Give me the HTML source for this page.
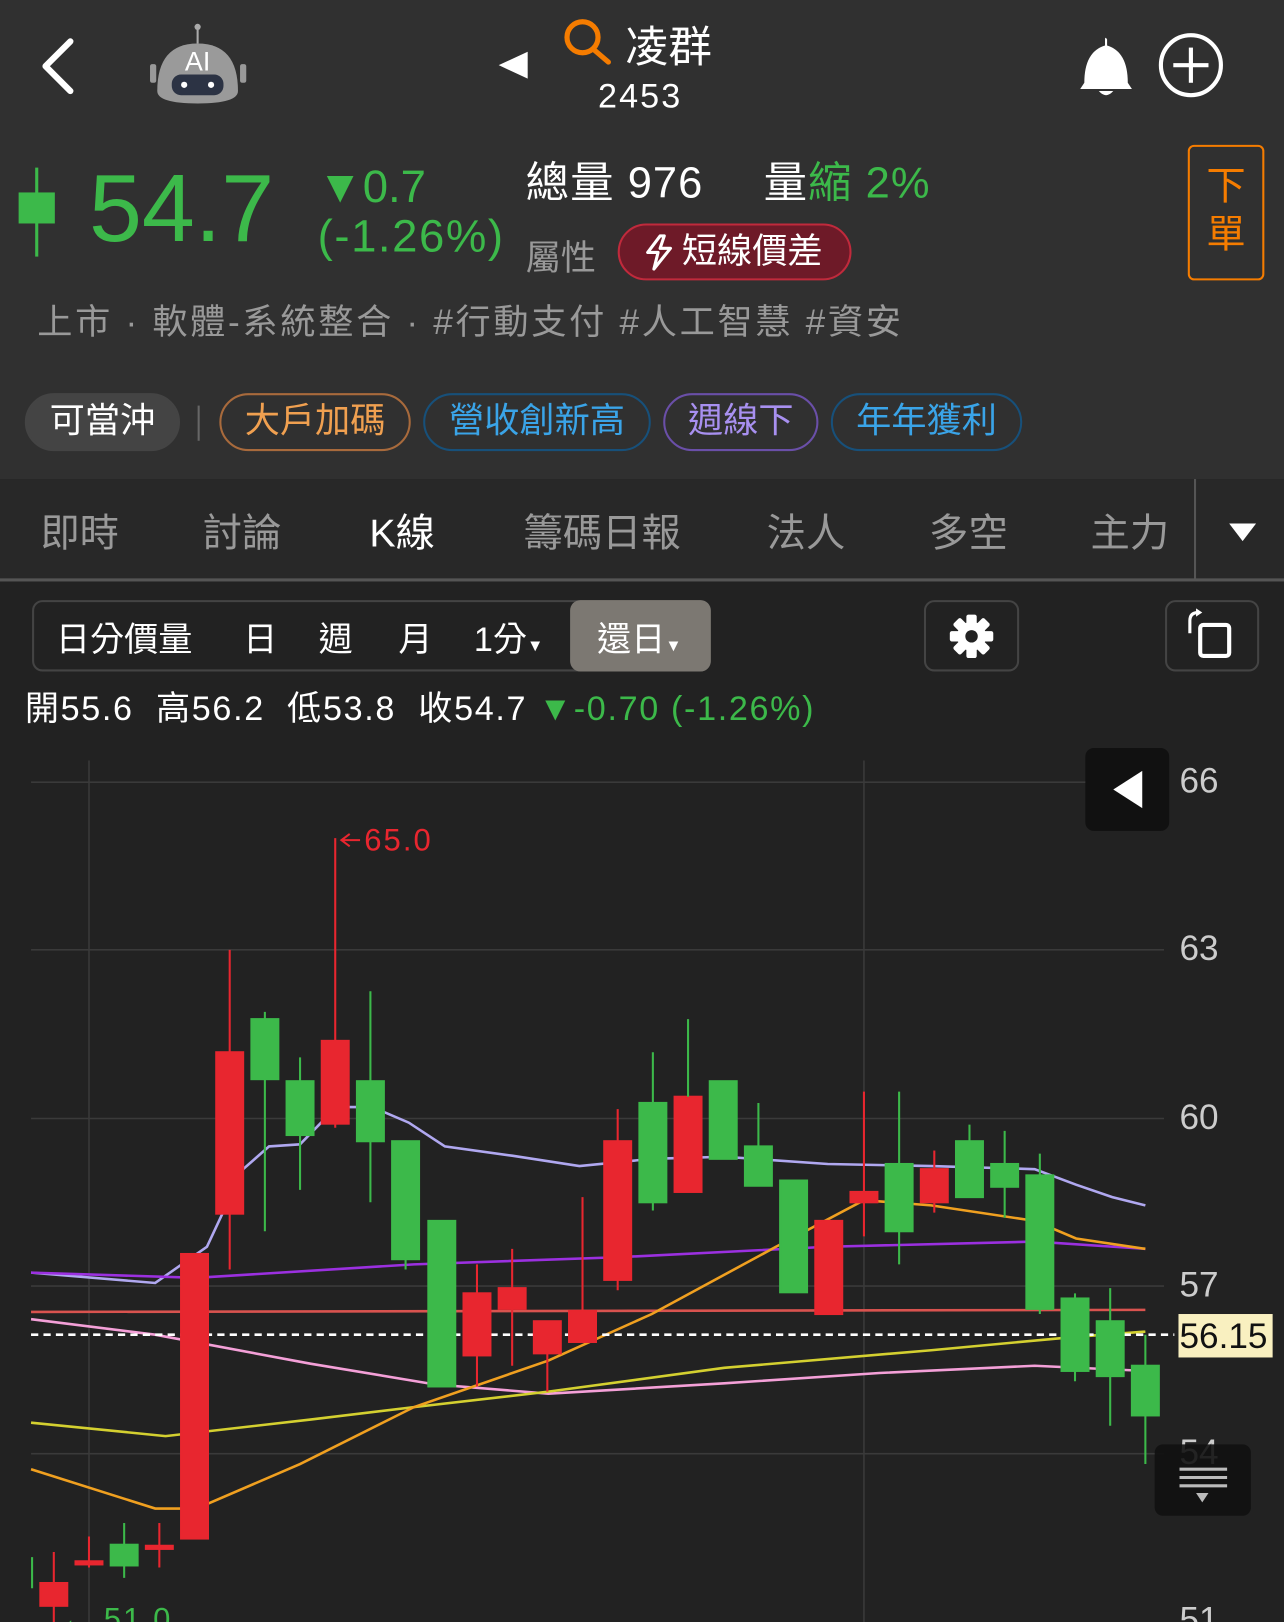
<!DOCTYPE html>
<html><head><meta charset="utf-8"><style>
html,body{margin:0;padding:0;background:#222;overflow:hidden}
body{width:1284px;height:1622px}
#w{position:absolute;left:0;top:0;width:1241px;height:1568px;transform:scale(1.03466);transform-origin:0 0;font-family:"Liberation Sans","Noto Sans CJK TC",sans-serif;color:#fff}
.a{position:absolute;white-space:nowrap}
.pill{position:absolute;top:380px;height:56px;border-radius:30px;border:2.5px solid;box-sizing:border-box;font-size:34px;line-height:51px;text-align:center}
.tab{position:absolute;top:484px;font-size:38px;color:#999}
</style></head><body><div id="w">
<div class="a" style="left:0;top:0;width:1241px;height:463px;background:#303030"></div>
<div class="a" style="left:0;top:463px;width:1241px;height:97px;background:#282828"></div>
<div class="a" style="left:0;top:559px;width:1241px;height:3px;background:#555"></div>
<div class="a" style="left:1154px;top:463px;width:2px;height:97px;background:#555"></div>

<svg class="a" style="left:0;top:0" width="1241" height="130">
<path d="M68 40 L44 64 L68 88" stroke="#fff" stroke-width="6" fill="none" stroke-linecap="round" stroke-linejoin="round"/>
<line x1="191" y1="26" x2="191" y2="42" stroke="#aaa" stroke-width="2"/><circle cx="191" cy="26" r="3" fill="#aaa"/>
<rect x="145" y="62" width="6" height="18" rx="2" fill="#999"/><rect x="232" y="62" width="6" height="18" rx="2" fill="#999"/>
<path d="M152 88 Q152 42 191 42 Q230 42 230 88 Q230 100 191 100 Q152 100 152 88Z" fill="#9a9a9a"/>
<rect x="166" y="72" width="50" height="20" rx="9" fill="#2c3344"/>
<circle cx="178" cy="82" r="3" fill="#fff"/><circle cx="204" cy="82" r="3" fill="#fff"/>
<text x="191" y="68" font-size="26" fill="#fff" text-anchor="middle" font-family="Liberation Sans">AI</text>
<path d="M510 50 L482 63 L510 76Z" fill="#fff"/>
<circle cx="563" cy="36" r="15" stroke="#f57c00" stroke-width="5" fill="none"/>
<line x1="574" y1="48" x2="588" y2="60" stroke="#f57c00" stroke-width="5" stroke-linecap="round"/>
<path d="M1048 80 Q1048 50 1068 44 L1068 38 Q1068 35 1070 38 L1070 44 Q1090 50 1090 80 L1094 86 L1044 86Z" fill="#fff"/>
<path d="M1062 88 Q1069 96 1076 88Z" fill="#fff"/>
<circle cx="1151" cy="63" r="29" stroke="#fff" stroke-width="4" fill="none"/>
<line x1="1134" y1="63" x2="1168" y2="63" stroke="#fff" stroke-width="4"/><line x1="1151" y1="46" x2="1151" y2="80" stroke="#fff" stroke-width="4"/>
</svg>
<div class="a" style="left:604px;top:12px;font-size:42px">凌群</div>
<div class="a" style="left:578px;top:74px;font-size:33px;letter-spacing:2px">2453</div>

<div class="a" style="left:34px;top:162px;width:3px;height:86px;background:#3cb94a"></div>
<div class="a" style="left:18px;top:186px;width:35px;height:30px;background:#3cb94a"></div>
<div class="a" style="left:86px;top:150px;font-size:92px;color:#3cb94a">54.7</div>
<div class="a" style="left:307px;top:156px;font-size:44px;color:#3cb94a">▼0.7</div>
<div class="a" style="left:307px;top:204px;font-size:44px;color:#3cb94a;letter-spacing:1.5px">(-1.26%)</div>
<div class="a" style="left:508px;top:143px;font-size:42px;letter-spacing:1px">總量 976</div>
<div class="a" style="left:738px;top:143px;font-size:42px;letter-spacing:1px">量<span style="color:#3cb94a">縮 2%</span></div>
<div class="a" style="left:508px;top:222px;font-size:34px;color:#999">屬性</div>
<div class="a" style="left:597px;top:216px;width:226px;height:55px;box-sizing:border-box;border:2.5px solid #c02a3c;border-radius:28px;background:#6e1a28;font-size:34px;line-height:50px;padding-left:60px">短線價差</div>
<svg class="a" style="left:620px;top:226px" width="34" height="36"><path d="M18 2 L6 18 L16 18 L12 34 L28 14 L18 14 L22 2Z" stroke="#fff" stroke-width="3" fill="none" stroke-linejoin="round"/></svg>
<div class="a" style="left:1148px;top:140px;width:74px;height:131px;box-sizing:border-box;border:2.5px solid #f57c00;border-radius:6px;color:#f57c00;font-size:38px;line-height:46px;text-align:center;padding-top:16px;white-space:normal">下<br>單</div>
<div class="a" style="left:36px;top:284px;font-size:34px;color:#999;letter-spacing:2.6px">上市 · 軟體-系統整合 · #行動支付 #人工智慧 #資安</div>

<div class="pill" style="left:24px;width:150px;background:#444;border-color:#444;color:#fff">可當沖</div>
<div class="a" style="left:191px;top:392px;width:2px;height:34px;background:#666"></div>
<div class="pill" style="left:212px;width:185px;border-color:#a86a3c;color:#f0a050">大戶加碼</div>
<div class="pill" style="left:409px;width:220px;border-color:#17507a;color:#3aa4e8">營收創新高</div>
<div class="pill" style="left:641px;width:150px;border-color:#6a4fa8;color:#a890f0">週線下</div>
<div class="pill" style="left:803px;width:185px;border-color:#17507a;color:#3aa4e8">年年獲利</div>

<div class="tab" style="left:39px">即時</div>
<div class="tab" style="left:196px">討論</div>
<div class="tab" style="left:357px;color:#fff">K線</div>
<div class="tab" style="left:506px">籌碼日報</div>
<div class="tab" style="left:741px">法人</div>
<div class="tab" style="left:898px">多空</div>
<div class="tab" style="left:1054px">主力</div>
<div class="a" style="left:1188px;top:506px;width:0;height:0;border-left:13px solid transparent;border-right:13px solid transparent;border-top:17px solid #fff"></div>

<div class="a" style="left:31px;top:580px;width:656px;height:69px;box-sizing:border-box;border:2.5px solid #444;border-radius:10px"></div>
<div class="a" style="left:551px;top:580px;width:136px;height:69px;background:#7c7872;border-radius:10px"></div>
<div class="a" style="left:54px;top:591px;font-size:33px">日分價量</div>
<div class="a" style="left:235px;top:591px;font-size:33px">日</div>
<div class="a" style="left:308px;top:591px;font-size:33px">週</div>
<div class="a" style="left:385px;top:591px;font-size:33px">月</div>
<div class="a" style="left:458px;top:591px;font-size:33px">1分<span style="font-size:16px">▼</span></div>
<div class="a" style="left:577px;top:591px;font-size:33px">還日<span style="font-size:16px">▼</span></div>
<div class="a" style="left:893px;top:580px;width:92px;height:69px;box-sizing:border-box;border:2.5px solid #444;border-radius:10px"></div>
<div class="a" style="left:1126px;top:580px;width:91px;height:69px;box-sizing:border-box;border:2.5px solid #444;border-radius:10px"></div>
<svg class="a" style="left:917px;top:593px" width="44" height="44"><g transform="translate(22,22)" fill="#fff"><circle r="14"/><g id="t"><rect x="-5" y="-21" width="10" height="10" rx="2"/></g><use href="#t" transform="rotate(45)"/><use href="#t" transform="rotate(90)"/><use href="#t" transform="rotate(135)"/><use href="#t" transform="rotate(180)"/><use href="#t" transform="rotate(225)"/><use href="#t" transform="rotate(270)"/><use href="#t" transform="rotate(315)"/><circle r="6" fill="#222"/></g></svg>
<svg class="a" style="left:1140px;top:588px" width="60" height="52"><rect x="20" y="16" width="28" height="30" rx="3" stroke="#fff" stroke-width="4" fill="none"/><path d="M10 24 L10 12 Q10 4 18 4" stroke="#fff" stroke-width="3" fill="none"/><path d="M16 0 L22 4 L16 8Z" fill="#fff"/></svg>

<div class="a" style="left:24px;top:658px;font-size:33px;letter-spacing:1.6px">開55.6 &nbsp;高56.2 &nbsp;低53.8 &nbsp;收54.7 <span style="color:#3cb94a">▼-0.70 (-1.26%)</span></div>

<svg class="a" style="left:0;top:720px" width="1241" height="848" viewBox="0 720 1241 848">
<g stroke="#3a3a3a" stroke-width="1.5">
<line x1="30" y1="756" x2="1125" y2="756"/><line x1="30" y1="918" x2="1125" y2="918"/><line x1="30" y1="1081" x2="1125" y2="1081"/><line x1="30" y1="1243" x2="1125" y2="1243"/><line x1="30" y1="1405" x2="1125" y2="1405"/>
<line x1="86" y1="735" x2="86" y2="1568"/><line x1="835" y1="735" x2="835" y2="1568"/>
</g>
<g font-size="34" fill="#ccc" font-family="Liberation Sans">
<text x="1140" y="766">66</text><text x="1140" y="928">63</text><text x="1140" y="1091">60</text><text x="1140" y="1253">57</text><text x="1140" y="1415">54</text><text x="1140" y="1577">51</text>
</g>
<g fill="none" stroke-width="2.5">
<polyline stroke="#b0a8f0" points="30,1230 150,1240 200,1205 235,1130 260,1108 290,1106 325,1070 360,1070 395,1085 430,1108 495,1117 560,1127 630,1120 700,1118 800,1125 900,1127 1000,1130 1040,1145 1075,1157 1107,1165"/>
<polyline stroke="#9b30e0" points="30,1230 190,1235 400,1222 600,1215 800,1205 1000,1200 1107,1207"/>
<polyline stroke="#d9534f" points="30,1268 1107,1266"/>
<polyline stroke="#f4a0d8" points="30,1275 150,1290 300,1318 420,1338 530,1347 700,1337 850,1327 1000,1320 1107,1325"/>
<polyline stroke="#d4d030" points="30,1375 160,1388 300,1372 400,1360 530,1345 700,1322 900,1305 1040,1292 1107,1287"/>
<polyline stroke="#f0a020" points="30,1420 150,1458 190,1458 290,1415 400,1360 530,1315 630,1270 750,1205 835,1160 900,1165 1000,1180 1040,1197 1107,1207"/>
<line x1="30" y1="1290" x2="1135" y2="1290" stroke="#fff" stroke-dasharray="7,5"/>
</g>
<g stroke-width="2">
<g stroke="#e8262f" fill="#e8262f">
<line x1="52" y1="1500" x2="52" y2="1568"/><rect x="39" y="1530" width="26" height="22"/>
<line x1="86" y1="1485" x2="86" y2="1515"/><rect x="73" y="1509" width="26" height="3"/>
<line x1="154" y1="1472" x2="154" y2="1515"/><rect x="141" y="1494" width="26" height="3"/>
<rect x="175" y="1212" width="26" height="275"/>
<line x1="222" y1="918" x2="222" y2="1227"/><rect x="209" y="1017" width="26" height="156"/>
<line x1="324" y1="810" x2="324" y2="1090"/><rect x="311" y="1006" width="26" height="80"/>
<line x1="461" y1="1222" x2="461" y2="1340"/><rect x="448" y="1250" width="26" height="60"/>
<line x1="495" y1="1207" x2="495" y2="1320"/><rect x="482" y="1245" width="26" height="20"/>
<line x1="529" y1="1277" x2="529" y2="1345"/><rect x="516" y="1277" width="26" height="31"/>
<line x1="563" y1="1157" x2="563" y2="1297"/><rect x="550" y="1267" width="26" height="30"/>
<line x1="597" y1="1072" x2="597" y2="1247"/><rect x="584" y="1103" width="26" height="134"/>
<rect x="652" y="1060" width="26" height="92"/>
<rect x="788" y="1180" width="26" height="90"/>
<line x1="835" y1="1055" x2="835" y2="1195"/><rect x="822" y="1152" width="26" height="10"/>
<line x1="903" y1="1112" x2="903" y2="1172"/><rect x="890" y="1130" width="26" height="32"/>
</g>
<g stroke="#3cb94a" fill="#3cb94a">
<line x1="31" y1="1505" x2="31" y2="1535"/>
<line x1="120" y1="1472" x2="120" y2="1525"/><rect x="107" y="1493" width="26" height="20"/>
<line x1="256" y1="978" x2="256" y2="1190"/><rect x="243" y="985" width="26" height="58"/>
<line x1="290" y1="1022" x2="290" y2="1150"/><rect x="277" y="1045" width="26" height="52"/>
<line x1="358" y1="958" x2="358" y2="1162"/><rect x="345" y="1045" width="26" height="58"/>
<line x1="392" y1="1103" x2="392" y2="1227"/><rect x="379" y="1103" width="26" height="114"/>
<rect x="414" y="1180" width="26" height="160"/>
<line x1="631" y1="1017" x2="631" y2="1170"/><rect x="618" y="1066" width="26" height="96"/>
<line x1="665" y1="985" x2="665" y2="1060"/>
<rect x="686" y="1045" width="26" height="75"/>
<line x1="733" y1="1066" x2="733" y2="1146"/><rect x="720" y="1108" width="26" height="38"/>
<rect x="754" y="1141" width="26" height="108"/>
<line x1="869" y1="1055" x2="869" y2="1222"/><rect x="856" y="1125" width="26" height="65"/>
<line x1="937" y1="1087" x2="937" y2="1157"/><rect x="924" y="1103" width="26" height="54"/>
<line x1="971" y1="1093" x2="971" y2="1177"/><rect x="958" y="1125" width="26" height="22"/>
<line x1="1005" y1="1115" x2="1005" y2="1270"/><rect x="992" y="1136" width="26" height="129"/>
<line x1="1039" y1="1250" x2="1039" y2="1335"/><rect x="1026" y="1255" width="26" height="70"/>
<line x1="1073" y1="1245" x2="1073" y2="1378"/><rect x="1060" y="1277" width="26" height="53"/>
<line x1="1107" y1="1290" x2="1107" y2="1415"/><rect x="1094" y="1320" width="26" height="48"/>
</g>
</g>
<path d="M338 806 L330 812 L338 818 M330 812 L348 812" stroke="#e8262f" stroke-width="2" fill="none"/>
<text x="352" y="822" font-size="30" fill="#e8262f" font-family="Liberation Sans" letter-spacing="2">65.0</text>
<text x="58" y="1575" font-size="30" fill="#3cb94a" font-family="Liberation Sans" letter-spacing="2">← 51.0</text>
<rect x="1049" y="723" width="81" height="80" rx="8" fill="#111"/>
<path d="M1104 745 L1076 763 L1104 781Z" fill="#fff"/>
<rect x="1139" y="1270" width="91" height="42" fill="#f9f0c0"/>
<text x="1140" y="1303" font-size="34" fill="#111" font-family="Liberation Sans">56.15</text>
<rect x="1116" y="1396" width="93" height="69" rx="8" fill="#111" opacity="0.9"/>
<g stroke="#bbb" stroke-width="3"><line x1="1140" y1="1420" x2="1186" y2="1420"/><line x1="1140" y1="1428" x2="1186" y2="1428"/><line x1="1140" y1="1436" x2="1186" y2="1436"/></g>
<path d="M1156 1443 L1168 1443 L1162 1452Z" fill="#bbb"/>
</svg>
</div></body></html>
